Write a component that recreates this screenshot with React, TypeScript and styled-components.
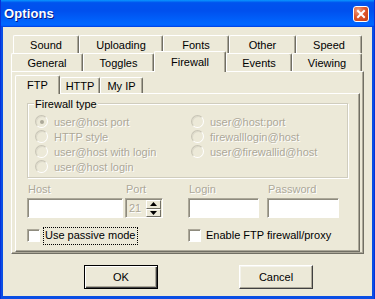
import React from 'react';
import styled, { createGlobalStyle } from 'styled-components';

const Global = createGlobalStyle`
  html, body { margin: 0; padding: 0; background: #fff; }
  body { font-family: "Liberation Sans", Arial, sans-serif; font-size: 11px; color: #000; }
  * { box-sizing: border-box; }
`;

const Window = styled.div`
  width: 375px;
  height: 299px;
  display: flex;
  flex-direction: column;
  background: #0A4EE4;
  border-left: 1px solid #0831D9;
  border-right: 1px solid #0831D9;
`;

const TitleBar = styled.div`
  height: 27px;
  flex: none;
  display: flex;
  align-items: center;
  justify-content: space-between;
  padding: 0 5px 0 3px;
  background: linear-gradient(to bottom, #0997FF 0%, #0053EE 10%, #0050EE 40%, #0066FF 86%, #0066FF 92%, #005BFF 95%, #003DD7 100%);
`;

const Title = styled.span`
  color: #fff;
  font-family: "Liberation Sans", Arial, sans-serif;
  font-weight: bold;
  font-size: 13px;
  text-shadow: 1px 1px #0A1883;
  letter-spacing: 0.1px;
`;

const CloseButton = styled.div`
  width: 16px;
  height: 16px;
  margin-top: 1px;
  border: 1px solid #fff;
  border-radius: 3px;
  background: radial-gradient(circle at 30% 25%, #F0A080 0%, #E0582E 45%, #C43D11 100%);
  display: flex;
  align-items: center;
  justify-content: center;
`;

const Body = styled.div`
  flex: 1;
  margin: 0 2px 3px 2px;
  background: #ECE9D8;
  display: flex;
  flex-direction: column;
  padding: 8px 0 0 8px;
`;

const TabArea = styled.div`
  width: 353px;
  display: flex;
  flex-direction: column;
`;

const TabRow = styled.div<{ $indent?: number; $h: number; $front?: boolean }>`
  display: flex;
  height: ${p => p.$h}px;
  padding-left: ${p => p.$indent ?? 0}px;
  position: relative;
  z-index: ${p => (p.$front ? 2 : 1)};
`;

const Tab = styled.div<{ $w: number; $sel?: boolean }>`
  width: ${p => p.$w}px;
  flex: none;
  display: flex;
  align-items: center;
  justify-content: center;
  background: #ECE9D8;
  border-left: 1px solid #fff;
  border-top: 1px solid #fff;
  border-right: 1px solid #716F64;
  box-shadow: inset -1px 0 #ACA899;
  border-radius: 2px 2px 0 0;
  padding-top: ${p => (p.$sel ? 0 : 1)}px;
  margin-top: ${p => (p.$sel ? -2 : 0)}px;
  margin-bottom: ${p => (p.$sel ? -1 : 0)}px;
  position: relative;
  z-index: ${p => (p.$sel ? 2 : 1)};
  white-space: nowrap;
`;

const Panel = styled.div<{ $h?: number }>`
  ${p => (p.$h ? `height: ${p.$h}px;` : 'flex: 1;')}
  display: flex;
  flex-direction: column;
  background: #ECE9D8;
  border-left: 1px solid #fff;
  border-top: 1px solid #fff;
  border-right: 1px solid #716F64;
  border-bottom: 1px solid #716F64;
  box-shadow: inset -1px -1px #ACA899;
`;

const OuterContent = styled.div`
  flex: 1;
  display: flex;
  flex-direction: column;
  padding: 5px 3px 1px 3px;
`;

const InnerPanelBody = styled.div`
  flex: 1;
  display: flex;
  flex-direction: column;
  padding: 9px 0 0 11px;
`;

const Group = styled.div`
  position: relative;
  width: 321px;
  height: 75px;
  border: 1px solid #D0CDBE;
  box-shadow: inset 1px 1px #fff, 1px 1px #fff;
  padding: 10px 0 0 7px;
`;

const GroupLabel = styled.span`
  position: absolute;
  top: -6px;
  left: 6px;
  padding: 0 1px;
  background: #ECE9D8;
  line-height: 13px;
`;

const RadioGrid = styled.div`
  display: grid;
  grid-template-columns: 156px 1fr;
  grid-template-rows: repeat(4, 15px);
  grid-auto-flow: column;
`;

const RadioItem = styled.div`
  display: flex;
  align-items: center;
  gap: 6px;
`;

const RadioCircle = styled.span<{ $checked?: boolean }>`
  width: 13px;
  height: 13px;
  flex: none;
  border-radius: 50%;
  border: 1px solid;
  border-color: #C8C5B6 #fff #fff #C8C5B6;
  background: #ECE9D8;
  box-shadow: inset 1px 1px #DDDACB;
  display: flex;
  align-items: center;
  justify-content: center;
  &::after {
    content: '';
    width: 4px;
    height: 4px;
    border-radius: 50%;
    background: ${p => (p.$checked ? '#ACA899' : 'transparent')};
  }
`;

const DisabledText = styled.span`
  color: #ACA899;
  text-shadow: 1px 1px #fff;
  white-space: nowrap;
`;

const FieldsRow = styled.div`
  display: flex;
  margin-top: 5px;
`;

const Field = styled.div<{ $w: number; $gap: number }>`
  width: ${p => p.$w}px;
  margin-right: ${p => p.$gap}px;
  display: flex;
  flex-direction: column;
`;

const FieldLabel = styled(DisabledText)`
  height: 12px;
  line-height: 12px;
  padding-left: 1px;
`;

const TextBox = styled.div<{ $bg?: string }>`
  margin-top: 3px;
  height: 20px;
  background: ${p => p.$bg ?? '#fff'};
  border: 1px solid;
  border-color: #ACA899 #fff #fff #ACA899;
  box-shadow: inset 1px 1px #8E8B7E;
  display: flex;
  align-items: center;
  padding: 0 1px 0 3px;
  justify-content: space-between;
`;

const Spinner = styled.div`
  width: 15px;
  height: 17px;
  margin-top: 1px;
  display: flex;
  flex-direction: column;
`;

const SpinBtn = styled.div`
  flex: 1;
  background: #ECE9D8;
  border: 1px solid;
  border-color: #fff #716F64 #716F64 #fff;
  display: flex;
  align-items: center;
  justify-content: center;
`;

const ChecksRow = styled.div`
  display: flex;
  margin-top: 9px;
  height: 17px;
  align-items: center;
`;

const CheckItem = styled.div<{ $w?: number }>`
  display: flex;
  align-items: center;
  ${p => (p.$w ? `width: ${p.$w}px;` : '')}
`;

const CheckBox = styled.span`
  width: 13px;
  height: 13px;
  flex: none;
  background: #fff;
  border: 1px solid;
  border-color: #ACA899 #fff #fff #ACA899;
  box-shadow: inset 1px 1px #8E8B7E;
`;

const CheckLabel = styled.span<{ $focus?: boolean }>`
  margin-left: 3px;
  padding: 1px 1px 2px 1px;
  border: 1px ${p => (p.$focus ? 'dotted #000' : 'solid transparent')};
  white-space: nowrap;
  line-height: 13px;
`;

const ButtonRow = styled.div`
  display: flex;
  gap: 81px;
  padding-left: 73px;
  margin-top: 11px;
`;

const Button = styled.button<{ $default?: boolean }>`
  width: 74px;
  height: 24px;
  font-family: "Liberation Sans", Arial, sans-serif;
  font-size: 11px;
  color: #000;
  background: #ECE9D8;
  padding: 0;
  border: 1px solid;
  border-color: ${p => (p.$default ? '#000' : '#fff #404040 #404040 #fff')};
  box-shadow: ${p =>
    p.$default
      ? 'inset 1px 1px #fff, inset -1px -1px #404040, inset -2px -2px #ACA899'
      : 'inset -1px -1px #ACA899, inset 1px 1px #F4F3EC'};
`;

const Arrow = ({ up }: { up?: boolean }) => (
  <svg width="7" height="4" viewBox="0 0 7 4">
    <polygon points={up ? '0,4 7,4 3.5,0' : '0,0 7,0 3.5,4'} fill="#000" />
  </svg>
);

const row1 = [
  { t: 'Sound', w: 66 },
  { t: 'Uploading', w: 84 },
  { t: 'Fonts', w: 66 },
  { t: 'Other', w: 67 },
  { t: 'Speed', w: 66 },
];
const row2 = [
  { t: 'General', w: 72 },
  { t: 'Toggles', w: 71 },
  { t: 'Firewall', w: 72, sel: true },
  { t: 'Events', w: 66 },
  { t: 'Viewing', w: 70 },
];
const inner = [
  { t: 'FTP', w: 45, sel: true },
  { t: 'HTTP', w: 40 },
  { t: 'My IP', w: 43 },
];

const radiosLeft = ['user@host port', 'HTTP style', 'user@host with login', 'user@host login'];
const radiosRight = ['user@host:port', 'firewalllogin@host', 'user@firewallid@host'];

export default function App() {
  return (
    <>
      <Global />
      <Window>
        <TitleBar>
          <Title>Options</Title>
          <CloseButton>
            <svg width="10" height="10" viewBox="0 0 10 10">
              <path d="M2 2 L8 8 M8 2 L2 8" stroke="#fff" strokeWidth="2" strokeLinecap="square" />
            </svg>
          </CloseButton>
        </TitleBar>
        <Body>
          <TabArea>
            <TabRow $indent={2} $h={18}>
              {row1.map(t => (
                <Tab key={t.t} $w={t.w}>{t.t}</Tab>
              ))}
            </TabRow>
            <TabRow $h={18} $front>
              {row2.map(t => (
                <Tab key={t.t} $w={t.w} $sel={t.sel}>{t.t}</Tab>
              ))}
            </TabRow>
            <Panel $h={183}>
              <OuterContent>
                <TabRow $h={16} $front>
                  {inner.map(t => (
                    <Tab key={t.t} $w={t.w} $sel={t.sel}>{t.t}</Tab>
                  ))}
                </TabRow>
                <Panel>
                  <InnerPanelBody>
                    <Group>
                      <GroupLabel>Firewall type</GroupLabel>
                      <RadioGrid>
                        {radiosLeft.map((r, i) => (
                          <RadioItem key={r}>
                            <RadioCircle $checked={i === 0} />
                            <DisabledText>{r}</DisabledText>
                          </RadioItem>
                        ))}
                        {radiosRight.map(r => (
                          <RadioItem key={r}>
                            <RadioCircle />
                            <DisabledText>{r}</DisabledText>
                          </RadioItem>
                        ))}
                      </RadioGrid>
                    </Group>
                    <FieldsRow>
                      <Field $w={96} $gap={2}>
                        <FieldLabel>Host</FieldLabel>
                        <TextBox />
                      </Field>
                      <Field $w={38} $gap={25}>
                        <FieldLabel>Port</FieldLabel>
                        <TextBox $bg="#ECE9D8">
                          <DisabledText>21</DisabledText>
                          <Spinner>
                            <SpinBtn><Arrow up /></SpinBtn>
                            <SpinBtn><Arrow /></SpinBtn>
                          </Spinner>
                        </TextBox>
                      </Field>
                      <Field $w={71} $gap={8}>
                        <FieldLabel>Login</FieldLabel>
                        <TextBox />
                      </Field>
                      <Field $w={72} $gap={0}>
                        <FieldLabel>Password</FieldLabel>
                        <TextBox />
                      </Field>
                    </FieldsRow>
                    <ChecksRow>
                      <CheckItem $w={161}>
                        <CheckBox />
                        <CheckLabel $focus>Use passive mode</CheckLabel>
                      </CheckItem>
                      <CheckItem>
                        <CheckBox />
                        <CheckLabel>Enable FTP firewall/proxy</CheckLabel>
                      </CheckItem>
                    </ChecksRow>
                  </InnerPanelBody>
                </Panel>
              </OuterContent>
            </Panel>
          </TabArea>
          <ButtonRow>
            <Button $default>OK</Button>
            <Button>Cancel</Button>
          </ButtonRow>
        </Body>
      </Window>
    </>
  );
}
